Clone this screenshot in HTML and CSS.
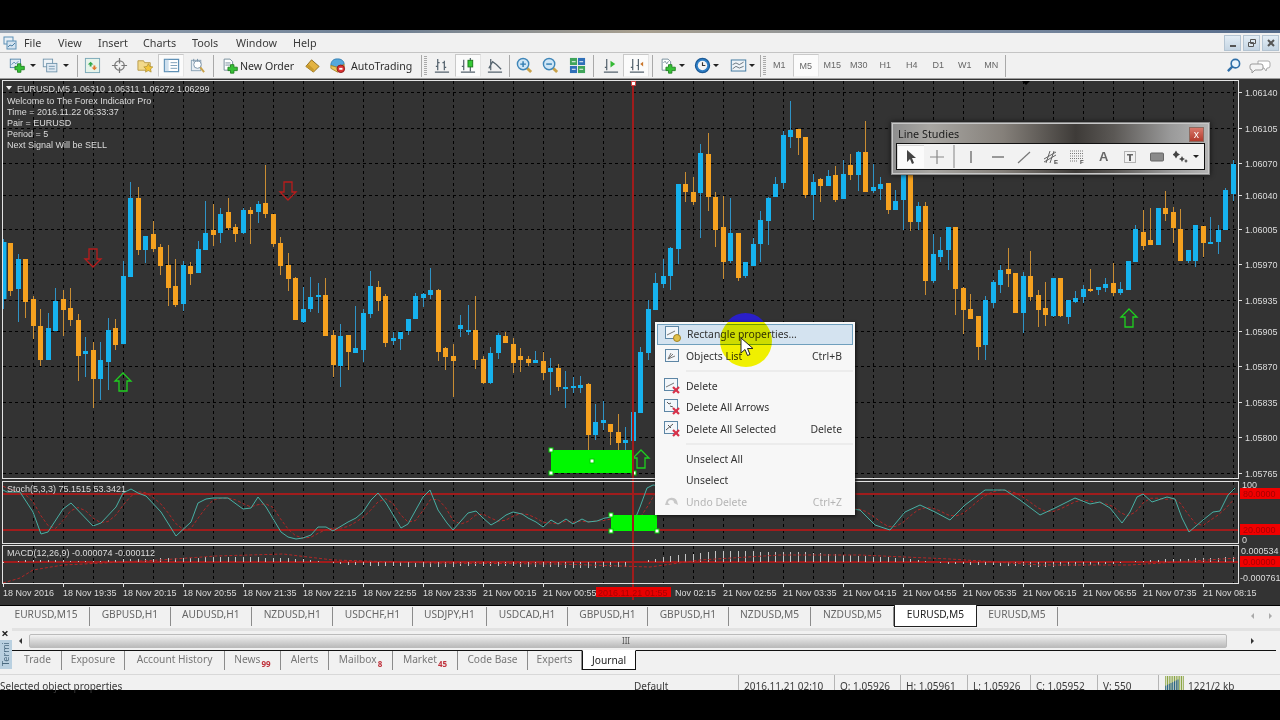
FILE: index.html
```html
<!DOCTYPE html>
<html lang="en">
<head>
    <meta charset="UTF-8">
    <title>MetaTrader 4 - EURUSD,M5</title>
    <link rel="stylesheet" href="styles.css">
</head>
<body>
<div class="window">
    <div class="topline"></div>

    <nav class="menubar">
        <svg class="appicon" viewBox="0 0 14 14"><rect x="1" y="1" width="9" height="7" fill="#e8f0f6" stroke="#5d8fb5"/><rect x="4" y="5" width="9" height="8" fill="#d3e2ee" stroke="#5d8fb5"/><path d="M5 11l2-2 2 1 3-3" fill="none" stroke="#4a7fa5"/></svg>
        <span class="m-file">File</span>
        <span class="m-view">View</span>
        <span class="m-insert">Insert</span>
        <span class="m-charts">Charts</span>
        <span class="m-tools">Tools</span>
        <span class="m-window">Window</span>
        <span class="m-help">Help</span>
        <div class="winbtns">
            <span class="winbtn"><svg viewBox="0 0 12 12"><path d="M3 9h6" stroke="#555" stroke-width="2"/></svg></span>
            <span class="winbtn"><svg viewBox="0 0 12 12"><path d="M4.500 2.500h5v4h-5zM2.500 5.500h5v4h-5z" fill="#dde8f0" stroke="#555"/></svg></span>
            <span class="winbtn"><svg viewBox="0 0 12 12"><path d="M3 3l6 6M9 3l-6 6" stroke="#555" stroke-width="2"/></svg></span>
        </div>
    </nav>

    <div class="toolbar">
        <span class="tool w-drop"><svg viewBox="0 0 20 18"><rect x="1.500" y="1.500" width="12" height="10" fill="#dfe9f2" stroke="#4a7fa5"/><path d="M3 8l3-3 2 2 3-3" fill="none" stroke="#4a7fa5"/><path d="M10 7h4v3h4v4h-4v3h-4v-3H7v-4h3z" fill="#36c136" stroke="#1c7d1c"/></svg><i class="caret"></i></span>
        <span class="tool w-drop"><svg viewBox="0 0 20 18"><rect x="1.500" y="1.500" width="11" height="9" fill="#eef3f7" stroke="#6a8fa8"/><rect x="5.500" y="6.500" width="12" height="10" fill="#dfe9f2" stroke="#6a8fa8"/><path d="M8 10h7M8 13h7" stroke="#6a8fa8"/></svg><i class="caret"></i></span>
        <i class="sep s-r0"></i>
        <span class="tool w-28"><svg viewBox="0 0 18 18"><rect x="1.500" y="1.500" width="15" height="15" fill="#e6f3ea" stroke="#7aa8b8"/><path d="M5 5l3 3H6v2H4V8H2z" fill="#2fa84a" transform="translate(2 0)"/><path d="M10 13l-3-3h2V8h2v2h2z" fill="#e0792a" transform="translate(1 1)"/></svg></span>
        <span class="tool"><svg viewBox="0 0 18 18"><circle cx="9" cy="9" r="5" fill="none" stroke="#777" stroke-width="1.300"/><path d="M9 1v6M9 11v6M1 9h6M11 9h6" stroke="#777" stroke-width="1.300"/></svg></span>
        <span class="tool"><svg viewBox="0 0 18 18"><path d="M1 4h6l1 2h6v8H1z" fill="#f2d98a" stroke="#b89a48"/><path d="M12 7l1.500 3 3.300.5-2.400 2.200.6 3.300-3-1.600-3 1.600.6-3.300-2.400-2.200 3.300-.5z" fill="#f2c53a" stroke="#a98a2a" stroke-width=".7"/></svg></span>
        <span class="tool on"><svg viewBox="0 0 18 18"><rect x="1.500" y="2.500" width="15" height="13" fill="#fff" stroke="#5d8fb5" stroke-width="1.300"/><rect x="2" y="3" width="4" height="12" fill="#cfe0ee"/><path d="M8 6h7M8 9h7M8 12h7" stroke="#7a9db8"/></svg></span>
        <span class="tool"><svg viewBox="0 0 18 18"><rect x="2.500" y="3.500" width="10" height="11" fill="#e6edf3" stroke="#8ba3b5"/><circle cx="9" cy="8" r="4" fill="#fff" stroke="#7a93a8"/><path d="M12 11l4 5" stroke="#c9a24a" stroke-width="2"/><path d="M5 2v3M9 2v3" stroke="#7a93a8"/></svg></span>
        <i class="sep s-r0"></i>
        <span class="tool w-text"><svg viewBox="0 0 20 18"><path d="M2.500 1.500h7l3 3v10h-10z" fill="#fff" stroke="#66808f"/><path d="M4 6h6M4 8.500h6" stroke="#66808f"/><path d="M10 8h4v3h4v4h-4v3h-4v-3H7v-4h3z" fill="#36c136" stroke="#1c7d1c"/></svg><b>New Order</b></span>
        <span class="tool"><svg viewBox="0 0 18 18"><path d="M2 10l6-7 8 7-6 6z" fill="#e3b341" stroke="#8d6c1f"/><path d="M2 10l8 6 .5-3-5.500-5z" fill="#c99a2b"/></svg></span>
        <span class="tool w-text2"><svg viewBox="0 0 18 18"><path d="M2 9c0-5 3-7 7-7s7 2 7 6l-7 3z" fill="#55a8dc" stroke="#2f7bb0"/><path d="M2 9l7 2 7-3v3l-7 5-7-4z" fill="#e8c45a" stroke="#a98a2a"/><circle cx="12.500" cy="12.500" r="4" fill="#d33" stroke="#8c1a1a"/><rect x="10.800" y="11.500" width="3.500" height="2" fill="#fff"/></svg><b>AutoTrading</b></span>
        <i class="sep s-r2"></i><i class="grip"></i>
        <span class="tool w-26h"><svg viewBox="0 0 18 18"><path d="M2 16h15M5 2v12M3 10h2M5 6h2M12 4v10M10 6h2M12 11h2" fill="none" stroke="#55636e" stroke-width="1.300"/></svg></span>
        <span class="tool w-26h on"><svg viewBox="0 0 18 18"><path d="M2 16h15M5 3v11M3 10h2M12 1v14" fill="none" stroke="#55636e" stroke-width="1.300"/><rect x="9.500" y="3.500" width="5" height="7" fill="#35c935" stroke="#1c7d1c"/></svg></span>
        <span class="tool w-26h"><svg viewBox="0 0 18 18"><path d="M2 16h15M5 2v12M3 12l4-7 4 3 5 5" fill="none" stroke="#55636e" stroke-width="1.300"/></svg></span>
        <i class="sep s-l1"></i>
        <span class="tool w-26h"><svg viewBox="0 0 18 18"><path d="M11 11l5 5" stroke="#c9a24a" stroke-width="3"/><circle cx="7.500" cy="7.500" r="6" fill="#cfe6f6" stroke="#3f86b8" stroke-width="1.500"/><path d="M4.500 7.500h6M7.500 4.500v6" stroke="#2f7bb0" stroke-width="1.500"/></svg></span>
        <span class="tool w-26h"><svg viewBox="0 0 18 18"><path d="M11 11l5 5" stroke="#c9a24a" stroke-width="3"/><circle cx="7.500" cy="7.500" r="6" fill="#cfe6f6" stroke="#3f86b8" stroke-width="1.500"/><path d="M4.500 7.500h6" stroke="#2f7bb0" stroke-width="1.500"/></svg></span>
        <span class="tool"><svg viewBox="0 0 18 18"><rect x="1" y="1" width="7.500" height="7.500" fill="#3fa45a"/><rect x="9.500" y="1" width="7.500" height="7.500" fill="#2f6fb8"/><rect x="1" y="9.500" width="7.500" height="7.500" fill="#2f6fb8"/><rect x="9.500" y="9.500" width="7.500" height="7.500" fill="#3fa45a"/><path d="M3 5h4M11 5h4M3 13h4M11 13h4" stroke="#fff"/></svg></span>
        <i class="sep"></i>
        <span class="tool"><svg viewBox="0 0 18 18"><path d="M2 16h15M5 2v12M3 11h2" fill="none" stroke="#55636e" stroke-width="1.300"/><path d="M9 4l5 3.500-5 3.500z" fill="#35b935"/></svg></span>
        <span class="tool on"><svg viewBox="0 0 18 18"><path d="M2 16h15M5 2v12M3 11h2M11 2v12M9 9h2" fill="none" stroke="#55636e" stroke-width="1.300"/><path d="M16 5l-3 2.500 3 2.500z" fill="#c9752a"/></svg></span>
        <i class="sep s-r0"></i>
        <span class="tool w-drop2"><svg viewBox="0 0 20 18"><path d="M2.500 1.500h7l3 3v10h-10z" fill="#fff" stroke="#66808f"/><path d="M4 6l2-2 2 3 2-3" fill="none" stroke="#66808f"/><path d="M10 8h4v3h4v4h-4v3h-4v-3H7v-4h3z" fill="#36c136" stroke="#1c7d1c"/></svg><i class="caret"></i></span>
        <span class="tool w-drop2"><svg viewBox="0 0 18 18"><circle cx="9" cy="9" r="7.500" fill="#2f80c8" stroke="#1c5a96" stroke-width="1.300"/><circle cx="9" cy="9" r="5" fill="#f4f4f4"/><path d="M9 5.500V9h3" fill="none" stroke="#333" stroke-width="1.200"/></svg><i class="caret"></i></span>
        <span class="tool w-drop3"><svg viewBox="0 0 20 18"><rect x="1.500" y="2.500" width="17" height="13" fill="#eef3f7" stroke="#4a7fa5" stroke-width="1.200"/><path d="M3 8l4-2 4 2 5-3M3 13l4-3 4 2 5-2" fill="none" stroke="#55636e"/></svg><i class="caret"></i></span>
        <i class="sep s-l0 s-r2"></i><i class="grip g-tight"></i>
        <span class="period">M1</span>
        <span class="period on">M5</span>
        <span class="period">M15</span>
        <span class="period">M30</span>
        <span class="period">H1</span>
        <span class="period">H4</span>
        <span class="period">D1</span>
        <span class="period">W1</span>
        <span class="period">MN</span>
        <i class="sep s-l0"></i>
        <div class="tb-right">
            <svg viewBox="0 0 16 16"><circle cx="10" cy="6" r="4.500" fill="#e8f3fb" stroke="#2f6fa8" stroke-width="1.700"/><path d="M7 9l-5 5" stroke="#2f6fa8" stroke-width="2.500"/></svg>
            <svg viewBox="0 0 22 16"><path d="M9 3h10a2 2 0 0 1 2 2v3a2 2 0 0 1-2 2h-1l-1 3-2-3H9z" fill="#fff" stroke="#aaa"/><path d="M3 6h9a2 2 0 0 1 2 2v2a2 2 0 0 1-2 2H6l-3 3v-3a2 2 0 0 1-2-2V8a2 2 0 0 1 2-2z" fill="#f4f4f4" stroke="#999"/></svg>
        </div>
    </div>

    <div class="workspace">
        <svg id="chart" class="chart" viewBox="0 79 1280 526" width="1280" height="526"></svg>

        <div class="linestudies">
            <div class="ls-title"><span>Line Studies</span><i class="ls-close">x</i></div>
            <div class="ls-body">
                <span class="ls-tool on"><svg viewBox="0 0 16 16"><path d="M4 1v12l3-3 2 5 2-1-2-5h4z" fill="#444"/></svg></span>
                <span class="ls-tool"><svg viewBox="0 0 16 16"><path d="M8 1v14M1 8h14" stroke="#888" stroke-width="1.200"/></svg></span>
                <i class="ls-sep"></i>
                <span class="ls-tool"><svg viewBox="0 0 16 16"><path d="M8 2v12" stroke="#666" stroke-width="1.300"/></svg></span>
                <span class="ls-tool"><svg viewBox="0 0 16 16"><path d="M2 8h12" stroke="#666" stroke-width="1.300"/></svg></span>
                <span class="ls-tool"><svg viewBox="0 0 16 16"><path d="M2 14L14 3" stroke="#777" stroke-width="1.200"/></svg></span>
                <span class="ls-tool"><svg viewBox="0 0 16 16"><path d="M1 10l12-7M1 13l12-7M3 14l4-12M7 14l4-12" stroke="#666" fill="none"/><text class="ls-mini" x="11" y="15">E</text></svg></span>
                <span class="ls-tool"><svg viewBox="0 0 16 16"><path d="M1 2h13M1 4.500h13M1 7h13M1 9.500h13M1 12h8" stroke="#777" stroke-dasharray="1 1"/><text class="ls-mini" x="11" y="15">F</text></svg></span>
                <span class="ls-tool ls-a">A</span>
                <span class="ls-tool"><svg viewBox="0 0 16 16"><rect x="2.500" y="2.500" width="11" height="11" fill="none" stroke="#777" stroke-dasharray="1 1"/><path d="M5 5h6v1.500H9V12H7V6.500H5z" fill="#666"/></svg></span>
                <span class="ls-tool"><svg viewBox="0 0 16 16"><rect x="1.500" y="4" width="13" height="8" rx="1" fill="#8a8a8a" stroke="#666"/></svg></span>
                <span class="ls-tool ls-wide"><svg viewBox="0 0 16 16"><path d="M3 1.500l1.500 2.500 2.500 1.500-2.500 1.500-1.500 2.500-1.500-2.500L-.5 5.500 1.500 4zM9 7l1 2 2 1-2 1-1 2-1-2-2-1 2-1zM13 10l.8 1.500 1.200.5-1.200.5L13 14l-.8-1.500-1.200-.5 1.200-.5z" fill="#444"/></svg><i class="caret"></i></span>
            </div>
        </div>

        <div class="bluedot"></div>
        <div class="ctxmenu">
            <div class="mi hot"><span class="mi-ico"><svg viewBox="0 0 18 18"><rect x="1.500" y="1.500" width="13" height="12" fill="#f2f6fa" stroke="#5d86a5"/><path d="M3 10l8-4" stroke="#777"/><circle cx="13" cy="13" r="3.500" fill="#e2c04a" stroke="#a08428"/></svg></span><span class="mi-text">Rectangle properties...</span></div>
            <div class="mi"><span class="mi-ico"><svg viewBox="0 0 18 18"><rect x="2.500" y="2.500" width="13" height="12" fill="#f2f6fa" stroke="#5d86a5"/><path d="M5 12l3-6M5 12l7-3M5 12l5-5" stroke="#777" fill="none"/></svg></span><span class="mi-text">Objects List</span><span class="mi-key">Ctrl+B</span></div>
            <div class="mi-sep"></div>
            <div class="mi"><span class="mi-ico"><svg viewBox="0 0 18 18"><rect x="1.500" y="1.500" width="13" height="12" fill="#f2f6fa" stroke="#5d86a5"/><path d="M3 10l8-4" stroke="#777"/><path d="M10 10l6 6M16 10l-6 6" stroke="#d8324a" stroke-width="2.200"/></svg></span><span class="mi-text">Delete</span></div>
            <div class="mi"><span class="mi-ico"><svg viewBox="0 0 18 18"><rect x="1.500" y="1.500" width="13" height="12" fill="#f2f6fa" stroke="#5d86a5"/><path d="M4 4l2 2 2-1M7 8l3 1" stroke="#555" fill="none"/><path d="M10 10l6 6M16 10l-6 6" stroke="#d8324a" stroke-width="2.200"/></svg></span><span class="mi-text">Delete All Arrows</span></div>
            <div class="mi"><span class="mi-ico"><svg viewBox="0 0 18 18"><rect x="1.500" y="1.500" width="13" height="12" fill="#f2f6fa" stroke="#5d86a5"/><path d="M3 10l7-6M5 5l3 3" stroke="#555" fill="none"/><path d="M10 10l6 6M16 10l-6 6" stroke="#d8324a" stroke-width="2.200"/></svg></span><span class="mi-text">Delete All Selected</span><span class="mi-key">Delete</span></div>
            <div class="mi-sep"></div>
            <div class="mi"><span class="mi-ico"></span><span class="mi-text">Unselect All</span></div>
            <div class="mi"><span class="mi-ico"></span><span class="mi-text">Unselect</span></div>
            <div class="mi off"><span class="mi-ico"><svg viewBox="0 0 18 18"><path d="M3 9a6 6 0 0 1 11-1l1 4-4-2a3 3 0 0 0-6 0l2 2H2z" fill="#c8c8c8"/></svg></span><span class="mi-text">Undo Delete</span><span class="mi-key">Ctrl+Z</span></div>
            <div class="halo"></div>
            <svg class="pointer" viewBox="0 0 14 20"><path d="M1 1v15l4-3.500 2.500 6 2.500-1-2.500-6H13z" fill="#fff" stroke="#222"/></svg>
        </div>
    </div>

    <div class="chart-tabs">
        <span class="ctab">EURUSD,M15</span>
        <span class="ctab">GBPUSD,H1</span>
        <span class="ctab">AUDUSD,H1</span>
        <span class="ctab">NZDUSD,H1</span>
        <span class="ctab">USDCHF,H1</span>
        <span class="ctab">USDJPY,H1</span>
        <span class="ctab">USDCAD,H1</span>
        <span class="ctab">GBPUSD,H1</span>
        <span class="ctab">GBPUSD,H1</span>
        <span class="ctab">NZDUSD,M5</span>
        <span class="ctab">NZDUSD,M5</span>
        <span class="ctab on">EURUSD,M5</span>
        <span class="ctab">EURUSD,M5</span>
        <span class="ctab-arrows"><i class="arr-l"></i><i class="arr-r"></i></span>
    </div>

    <div class="terminal">
        <div class="term-side">
            <span class="term-x">×</span>
            <span class="term-label">Termi</span>
        </div>
        <div class="term-main">
            <div class="hscroll">
                <i class="arr-l dark"></i>
                <div class="thumb"><span>III</span></div>
                <i class="arr-r dark"></i>
            </div>
            <div class="term-tabs">
                <span class="ttab">Trade</span>
                <span class="ttab">Exposure</span>
                <span class="ttab">Account History</span>
                <span class="ttab">News<sub>99</sub></span>
                <span class="ttab">Alerts</span>
                <span class="ttab">Mailbox<sub>8</sub></span>
                <span class="ttab">Market<sub>45</sub></span>
                <span class="ttab">Code Base</span>
                <span class="ttab">Experts</span>
                <span class="ttab on">Journal</span>
            </div>
        </div>
    </div>

    <footer class="statusbar">
        <span class="st st-msg">Selected object properties</span>
        <span class="st st-profile">Default</span>
        <span class="st st-time">2016.11.21 02:10</span>
        <span class="st st-o">O: 1.05926</span>
        <span class="st st-h">H: 1.05961</span>
        <span class="st st-l">L: 1.05926</span>
        <span class="st st-h">C: 1.05952</span>
        <span class="st st-v">V: 550</span>
        <span class="st st-net"><svg viewBox="0 0 22 16"><path d="M1 16V0M3 16V0M5 16V0M7 16V0M9 16V0M11 16V0M13 16V0M15 16V0M17 16V0M19 16V0M21 16V0" stroke="#7d9a2a"/><path d="M1 16V11M3 16V10M5 16V9M7 16V8M9 16V7M11 16V6M13 16V5M15 16V4" stroke="#1c5a96"/></svg>1221/2 kb</span>
    </footer>
</div>
<script src="chart.js"></script>
</body>
</html>
```

FILE: styles.css
```css
* {
    box-sizing: border-box;
}
body {
    margin: 0;
    background: #000;
    height: 720px;
    overflow: hidden;
    font-family: "Noto Sans", "Liberation Sans", sans-serif;
    font-size: 10.400px;
    color: #333;
}
.window {
    padding-top: 30px;
    height: 690px;
}
.topline {
    height: 3px;
    background: linear-gradient(90deg, #9aa6b4, #6d7f94 30%, #a89f8e 50%, #7d8ca0 75%, #556b8a);
}

/* menu */
.menubar {
    display: flex;
    align-items: center;
    height: 19px;
    background: #f1f1f1;
    font-size: 10.800px;
}
.menubar span {
    color: #3a3a3a;
    flex: none;
}
.appicon {
    width: 14px;
    height: 14px;
    margin-left: 3px;
    margin-right: 7px;
}
.m-file { width: 34px; }
.m-view { width: 40px; }
.m-insert { width: 45px; }
.m-charts { width: 49px; }
.m-tools { width: 44px; }
.m-window { width: 57px; }
.m-help { width: 30px; }
.winbtns {
    margin-left: auto;
    margin-right: 1px;
    display: flex;
    gap: 2px;
}
.winbtn {
    width: 17px;
    height: 16px;
    background: linear-gradient(#e3edf5, #c5d5e3);
    border: 1px solid #b4c4d2;
    display: flex;
    align-items: center;
    justify-content: center;
}
.winbtn svg {
    width: 12px;
    height: 12px;
}

/* toolbars */
.toolbar {
    display: flex;
    align-items: center;
    height: 27px;
    background: #f1f1f1;
    border-top: 1px solid #c4c4c4;
    border-bottom: 1px solid #9c9c9c;
    padding-left: 8px;
}
.tool {
    display: flex;
    align-items: center;
    justify-content: center;
    height: 23px;
    width: 26px;
    flex: none;
}
.tool svg {
    width: 17px;
    height: 17px;
    flex: none;
}
.tool.on, .period.on {
    background: #fbfbfb;
    border: 1px solid #c9c9c9;
    border-bottom-color: #f1f1f1;
    border-right-color: #e4e4e4;
}
.tool b, .period {
    font-weight: normal;
}
.tool b {
    color: #2e2e2e;
    font-size: 10.600px;
    white-space: nowrap;
}
.w-28 { width: 28px; }
.w-26h { width: 26.500px; }
.w-drop { width: 33px; justify-content: flex-start; padding-left: 1px; }
.w-drop2 { width: 33.500px; justify-content: flex-start; padding-left: 7px; }
.w-drop3 { width: 40px; justify-content: flex-start; padding-left: 10px; }
.w-drop2 .caret, .w-drop3 .caret { margin-left: 2px; }
.w-text { width: 85px; justify-content: flex-start; padding-left: 8px; }
.w-text b { margin-left: 1px; }
.w-text2 { width: 93px; justify-content: flex-start; padding-left: 4px; }
.w-text2 b { margin-left: 5px; }
.caret {
    display: block;
    width: 0;
    height: 0;
    margin-left: 4px;
    border: 3px solid transparent;
    border-top: 3px solid #222;
    border-bottom: 0;
}
.sep {
    display: block;
    flex: none;
    width: 1px;
    height: 22px;
    margin: 0 3px;
    background: #a9a9a9;
}
.s-r0 { margin-right: 0; }
.s-r2 { margin-right: 2px; }
.s-l0 { margin-left: 0; }
.s-l1 { margin-left: 1.500px; margin-right: 1px; }
.grip {
    display: block;
    flex: none;
    width: 3px;
    height: 19px;
    margin-right: 1px;
    background: repeating-linear-gradient(#aaa 0 1px, transparent 1px 2px);
}
.g-tight {
    margin-right: 0;
}
.period {
    flex: none;
    width: 26.500px;
    height: 23px;
    line-height: 22px;
    text-align: center;
    font-size: 9px;
    color: #666;
    font-family: "Liberation Sans", sans-serif;
}
.tb-right {
    margin-left: auto;
    margin-right: 9px;
    display: flex;
    align-items: center;
    gap: 8px;
}
.tb-right svg:first-child {
    width: 15px;
    height: 15px;
}
.tb-right svg:last-child {
    width: 22px;
    height: 16px;
}

/* chart */
.workspace {
    position: relative;
    height: 526px;
    background: #333;
}
.chart {
    display: block;
    background: #333;
    font-family: "Liberation Sans", sans-serif;
    font-size: 9px;
}
.chart text {
    fill: #dcdcdc;
}
.chart .flag-text {
    fill: #a80000;
}

/* floating line studies */
.linestudies {
    position: absolute;
    left: 891px;
    top: 43px;
    width: 319px;
    height: 53px;
    padding: 3px 4px 0;
    border: 1px solid #888;
    background: linear-gradient(90deg, #8e8e8e, #a8a6a2 12%, #85807a 35%, #3e3b38 58%, #5b5855 70%, #9a9a9a 88%, #b5b5b5);
    box-shadow: 0 0 5px #111, inset 0 0 0 1px #c8c8c8;
}
.ls-title {
    display: flex;
    justify-content: space-between;
    align-items: center;
    height: 17px;
    font-size: 10.800px;
    color: #1c1c1c;
}
.ls-title span {
    margin-left: 2px;
    margin-top: -3px;
}
.ls-close {
    width: 15px;
    height: 15px;
    margin-right: 1px;
    background: linear-gradient(#d8776a, #b23a2c);
    border: 1px solid #8c6a60;
    color: #fff;
    font-style: normal;
    font-size: 10px;
    line-height: 12px;
    text-align: center;
}
.ls-body {
    display: flex;
    align-items: center;
    height: 27px;
    background: #f2f2f2;
    border: 1px solid #111;
}
.ls-tool {
    flex: none;
    width: 26.500px;
    height: 23px;
    display: flex;
    align-items: center;
    justify-content: center;
}
.ls-tool.on {
    background: #fbfbfb;
    border: 1px solid #d8d8d8;
    border-right: 0;
    border-bottom: 0;
}
.ls-tool svg {
    width: 16px;
    height: 16px;
    flex: none;
}
.ls-a {
    font-weight: bold;
    font-size: 13px;
    color: #666;
    font-family: "Liberation Sans", sans-serif;
}
.ls-wide {
    width: 32px;
}
.ls-mini {
    font: bold 6px "Liberation Sans", sans-serif;
    fill: #444;
}
.ls-sep {
    display: block;
    width: 2px;
    height: 23px;
    margin: 0 3px;
    background: #bbb;
}

/* context menu */
.bluedot {
    position: absolute;
    left: 722px;
    top: 234px;
    width: 47px;
    height: 47px;
    border-radius: 50%;
    background: #2a1fc8;
}
.ctxmenu {
    position: absolute;
    left: 655px;
    top: 243px;
    width: 200px;
    height: 193px;
    padding: 1.500px 2px;
    background: #f7f7f7;
    overflow: hidden;
    box-shadow: 1px 1px 3px #111;
    font-size: 10.400px;
}
.halo {
    position: absolute;
    left: 65px;
    top: -7px;
    width: 52px;
    height: 52px;
    border-radius: 50%;
    background: #f8f800;
    mix-blend-mode: multiply;
}
.mi {
    position: relative;
    display: flex;
    align-items: center;
    height: 21.700px;
    color: #333;
}
.mi.hot {
    background: #d4e3f0;
    border: 1px solid #6f9fbd;
}
.mi-ico {
    flex: none;
    width: 29px;
    height: 100%;
    display: flex;
    align-items: center;
    justify-content: center;
    padding-left: 1px;
}
.mi-ico svg {
    width: 18px;
    height: 18px;
}
.mi-text {
    flex: 1;
    white-space: nowrap;
}
.mi-key {
    margin-right: 11px;
}
.mi.off {
    color: #b4b4b4;
}
.mi-sep {
    height: 8px;
    background: linear-gradient(#f7f7f7 3px, #ececec 3px 5px, #f7f7f7 5px);
    margin-left: 29px;
}
.pointer {
    position: absolute;
    left: 85px;
    top: 15px;
    width: 14px;
    height: 20px;
}

/* chart tabs */
.chart-tabs {
    display: flex;
    height: 23px;
    background: #f1f1f1;
    border-top: 1px solid #000;
    font-size: 10.200px;
    color: #666;
    padding-left: 3px;
}
.ctab {
    flex: none;
    height: 19px;
    margin-top: 1px;
    line-height: 15px;
    padding: 0 11.500px;
    border-right: 1px solid #8c8c8c;
    white-space: nowrap;
}
.ctab.on {
    height: 22px;
    margin-top: -1px;
    padding-top: 2px;
    line-height: 15px;
    background: #fff;
    border: 1px solid #222;
    border-top: 0;
    color: #222;
}
.ctab-arrows {
    margin-left: auto;
    margin-right: 8px;
    display: flex;
    align-items: center;
    gap: 15px;
    height: 19px;
}
.arr-l, .arr-r {
    display: block;
    width: 0;
    height: 0;
    border: 3px solid transparent;
}
.arr-l {
    border-right: 3px solid #aaa;
    border-left: 0;
}
.arr-r {
    border-left: 3px solid #aaa;
    border-right: 0;
}
.arr-l.dark { border-right-color: #333; }
.arr-r.dark { border-left-color: #333; }

/* terminal */
.terminal {
    display: flex;
    height: 46px;
    background: #f1f1f1;
}
.term-side {
    flex: none;
    width: 12px;
    display: flex;
    flex-direction: column;
    align-items: flex-start;
}
.term-x {
    height: 12px;
    width: 10px;
    text-align: center;
    font-size: 13px;
    font-weight: bold;
    line-height: 10px;
    color: #222;
}
.term-label {
    width: 12px;
    height: 29px;
    background: #b9d0e0;
    color: #4a6a80;
    font-size: 9px;
    line-height: 12px;
    writing-mode: vertical-rl;
    transform: rotate(180deg);
    text-align: center;
    white-space: nowrap;
}
.term-main {
    flex: 1;
    border-top: 3px solid #e2e2e2;
}
.hscroll {
    display: flex;
    align-items: center;
    height: 19px;
    padding: 3px 0;
}
.hscroll .arr-l {
    margin-left: 7px;
    margin-right: 7px;
}
.hscroll .arr-r {
    margin-left: 24px;
}
.thumb {
    width: 1198px;
    height: 14px;
    border: 1px solid #bbb;
    border-radius: 2px;
    background: linear-gradient(#f2f2f2, #dcdcdc 40%, #bcbcbc);
    text-align: center;
    font-size: 8px;
    line-height: 12px;
    color: #555;
}
.thumb span {
    position: relative;
    left: -2px;
}
.term-tabs {
    display: flex;
    height: 24px;
    border-top: 1px solid #111;
    margin-right: 4px;
    padding-left: 2px;
    font-size: 10.200px;
    color: #777;
}
.ttab {
    flex: none;
    height: 19px;
    line-height: 17px;
    text-align: center;
    border-right: 1px solid #8c8c8c;
    white-space: nowrap;
}
.ttab:nth-child(1) { width: 48px; }
.ttab:nth-child(2) { width: 63px; }
.ttab:nth-child(3) { width: 100px; }
.ttab:nth-child(4) { width: 56px; }
.ttab:nth-child(5) { width: 48px; }
.ttab:nth-child(6) { width: 64px; }
.ttab:nth-child(7) { width: 65px; }
.ttab:nth-child(8) { width: 70px; }
.ttab:nth-child(9) { width: 54px; }
.ttab:nth-child(10) { width: 54px; }
.ttab sub {
    font-size: 8px;
    font-weight: bold;
    color: #c0323c;
    margin-left: 1px;
    vertical-align: -4px;
    line-height: 0;
}
.ttab.on {
    height: 20px;
    margin-top: -1px;
    padding-top: 1px;
    background: #fff;
    border: 1px solid #111;
    border-top: 1px solid #fff;
    color: #222;
}

/* status bar: the text runs a little past the bottom of the window, onto the black */
.statusbar {
    display: flex;
    height: 16px;
    background: #f1f1f1;
    border-top: 1px solid #d8d8d8;
    font-size: 10px;
    color: #3a3a3a;
    line-height: 22px;
}
.st {
    flex: none;
    padding-left: 5px;
    border-left: 1px solid #b5b5b5;
    white-space: nowrap;
}
.st-msg { width: 630px; padding-left: 0; border: 0; }
.st-profile { width: 108px; border: 0; padding-left: 4px; }
.st-time { width: 96px; }
.st-o { width: 66px; }
.st-h { width: 67px; }
.st-l { width: 63px; }
.st-v { width: 61px; }
.st-net { display: flex; align-items: flex-start; padding-left: 5px; }
.st-net svg {
    width: 21px;
    height: 14px;
    margin-right: 3px;
    margin-top: 1px;
}
```

FILE: chart.js
```js
// chart drawing: page coordinates, one candle every 7.5px from x=3
// [type, bodyTop, bodyBottom, wickTop, wickBottom], type 0 = blue, 1 = orange
const candles = [
    [0,242,299,239,309],[1,243,291,243,296],[0,259,289,254,322],[1,259,302,259,318],[1,299,326,296,339],
    [1,326,360,309,366],[0,328,360,313,360],[0,301,331,288,331],[1,299,310,290,336],[1,308,320,288,326],
    [1,320,356,314,381],[0,351,354,337,377],[1,350,379,342,408],[0,360,379,342,400],[0,330,362,318,390],
    [1,328,345,319,350],[0,276,344,261,344],[0,198,277,182,277],[1,198,250,187,255],[0,236,250,236,263],
    [1,234,249,221,252],[1,247,266,244,275],[1,265,288,245,306],[1,286,305,259,307],[0,265,304,261,311],
    [1,266,274,262,285],[0,249,273,241,273],[0,233,250,201,250],[1,230,235,204,246],[0,214,233,208,243],
    [1,212,228,198,230],[1,227,234,224,242],[0,210,233,208,234],[1,210,214,207,244],[0,204,212,201,223],
    [1,203,214,165,218],[1,214,244,214,247],[1,243,266,237,275],[1,265,279,253,291],[1,278,320,277,320],
    [0,309,322,287,323],[0,297,309,277,312],[0,295,296,283,313],[1,295,336,278,336],[1,335,365,330,377],
    [0,336,366,324,387],[1,335,352,335,370],[0,348,353,306,353],[0,313,350,309,362],[0,286,314,271,318],
    [1,287,301,281,311],[1,296,343,294,347],[0,338,341,332,345],[0,332,339,332,350],[0,319,331,319,335],
    [0,296,319,293,319],[0,294,298,293,307],[0,290,295,268,299],[1,290,352,289,361],[1,348,357,347,370],
    [1,356,361,344,397],[0,325,329,315,337],[0,330,331,305,335],[1,330,360,296,369],[1,359,383,356,384],
    [0,353,383,347,384],[0,335,353,333,359],[1,336,343,332,343],[1,344,363,338,373],[1,356,360,348,372],
    [1,359,363,356,366],[0,360,363,351,363],[1,361,373,352,380],[0,368,372,358,395],[1,368,387,364,391],
    [0,387,388,371,408],[0,386,388,377,393],[0,385,388,376,393],[1,384,435,383,462],[0,422,435,404,440],
    [0,420,423,401,430],[1,424,432,424,445],[1,432,443,414,450],[0,440,443,427,450],[0,412,441,408,441],
    [0,352,413,347,413],[0,309,353,300,360],[0,283,310,273,310],[0,276,284,259,288],[0,248,276,247,290],
    [0,184,249,184,264],[1,184,192,172,202],[1,192,202,177,205],[0,153,193,144,238],[1,154,197,133,211],
    [1,197,230,192,247],[1,227,262,196,279],[0,233,261,198,263],[1,233,278,233,281],[0,262,276,262,278],
    [0,244,266,238,266],[0,220,244,211,262],[0,198,221,197,245],[0,184,197,177,197],[0,135,183,131,189],
    [0,130,137,101,148],[1,129,138,129,155],[1,137,195,137,198],[0,182,195,174,220],[1,179,186,178,202],
    [0,176,186,170,186],[1,175,200,166,202],[0,174,199,160,199],[1,165,175,154,180],[0,152,175,151,191],
    [1,152,192,121,192],[0,187,191,164,193],[0,184,189,177,200],[1,183,210,183,214],[0,201,210,190,210],
    [0,175,200,175,230],[1,175,222,175,231],[0,206,222,202,230],[1,206,281,202,295],[0,254,281,234,283],
    [0,250,257,237,262],[0,227,250,227,270],[1,227,289,227,315],[1,288,310,287,334],[1,309,319,294,319],
    [1,316,347,316,360],[0,300,345,296,360],[0,282,303,280,308],[0,270,285,265,293],[1,269,274,248,287],
    [1,273,313,273,313],[0,276,313,272,333],[1,276,297,251,301],[1,295,310,290,327],[1,308,315,282,326],
    [0,278,316,278,317],[1,278,316,278,317],[0,300,317,300,324],[0,298,302,291,303],[0,289,297,285,303],
    [1,289,291,269,292],[0,287,290,287,295],[0,284,288,278,292],[1,283,293,263,296],[0,289,293,282,295],
    [0,261,290,261,290],[0,229,262,225,262],[1,232,246,210,250],[1,240,245,208,245],[0,208,245,208,245],
    [1,208,214,191,221],[1,212,228,207,243],[1,229,261,209,261],[0,250,261,250,263],[0,225,261,225,267],
    [1,226,243,226,257],[0,242,243,217,243],[0,230,242,225,254],[0,190,230,188,230],[0,164,194,160,201]
];

const priceLevels = [
    [92,'1.06140'],[128,'1.06105'],[163,'1.06070'],[195,'1.06040'],[229,'1.06005'],[264,'1.05970'],
    [300,'1.05935'],[331,'1.05905'],[366,'1.05870'],[402,'1.05835'],[437,'1.05800'],[473,'1.05765']
];

const timeLabels = [
    [3,'18 Nov 2016'],[63,'18 Nov 19:35'],[123,'18 Nov 20:15'],[183,'18 Nov 20:55'],[243,'18 Nov 21:35'],
    [303,'18 Nov 22:15'],[363,'18 Nov 22:55'],[423,'18 Nov 23:35'],[483,'21 Nov 00:15'],[543,'21 Nov 00:55'],
    [723,'21 Nov 02:55'],[783,'21 Nov 03:35'],[843,'21 Nov 04:15'],[903,'21 Nov 04:55'],
    [963,'21 Nov 05:35'],[1023,'21 Nov 06:15'],[1083,'21 Nov 06:55'],[1143,'21 Nov 07:35'],[1203,'21 Nov 08:15']
];

const infoLines = [
    'Welcome to The Forex Indicator Pro',
    'Time = 2016.11.22 06:33:37',
    'Pair = EURUSD',
    'Period = 5',
    'Next Signal Will be SELL'
];

// stochastic main line
const stoch = [
    [3,490],[7,492],[20,492],[33,512],[41,534],[48,532],[63,509],[71,503],[93,526],[101,523],[116,507],[123,493],
    [131,489],[138,493],[146,496],[161,512],[176,536],[191,522],[198,503],[206,499],[213,498],[228,498],[243,509],
    [251,508],[258,497],[266,507],[281,532],[288,537],[296,539],[303,538],[311,535],[318,527],[326,527],[333,531],
    [348,522],[356,518],[363,512],[371,500],[378,493],[386,503],[401,528],[408,524],[423,497],[430,490],[438,510],
    [447,523],[453,530],[460,522],[468,513],[476,511],[483,518],[491,525],[498,521],[506,515],[513,512],[522,514],
    [528,518],[536,522],[543,527],[551,520],[558,524],[566,519],[573,524],[582,519],[588,522],[597,521],[605,518],
    [612,517],[618,519],[627,522],[633,524],[640,507],[647,488],[653,485],[860,510],[875,525],[890,530],[905,512],
    [920,505],[935,512],[950,520],[965,505],[985,490],[1005,490],[1020,500],[1040,515],[1055,508],[1075,498],[1090,504],
    [1100,502],[1110,508],[1122,523],[1130,512],[1137,497],[1143,494],[1152,502],[1167,497],[1175,499],[1182,518],
    [1189,532],[1203,520],[1213,512],[1220,511],[1228,495],[1235,488]
];

// macd histogram outline and signal line
const macdBars = [
    [3,-1],[30,2],[100,1],[130,3],[230,5],[290,4],[330,0],[345,-3],[420,-5],[500,-4],[580,-6],[625,-5],[640,0],
    [670,6],[720,11],[800,10],[860,6],[900,4],[950,-2],[1040,-5],[1100,-3],[1150,2],[1238,5]
];
const macdSignal = [
    [3,583],[20,578],[33,570],[63,565],[123,562],[160,560],[216,556],[283,554],[333,560],[430,563],[560,564],[620,566],
    [650,567],[700,560],[780,555],[860,555],[950,559],[1040,565],[1130,565],[1238,558]
];

const svg = document.getElementById('chart');
const NS = 'http://www.w3.org/2000/svg';

function el(name, attrs, text) {
    const node = document.createElementNS(NS, name);
    for (const key in attrs) node.setAttribute(key, attrs[key]);
    if (text) node.textContent = text;
    svg.appendChild(node);
    return node;
}

function line(x1, y1, x2, y2, color, width, dash) {
    const attrs = { x1, y1, x2, y2, stroke: color, 'stroke-width': width || 1 };
    if (dash) attrs['stroke-dasharray'] = dash;
    el('line', attrs);
}

function interp(points, x) {
    for (let i = 1; i < points.length; i++) {
        if (x <= points[i][0]) {
            const [x0, y0] = points[i - 1];
            const [x1, y1] = points[i];
            return y0 + (y1 - y0) * (x - x0) / (x1 - x0);
        }
    }
    return points[points.length - 1][1];
}

function poly(points, color, width, dash) {
    const attrs = { points: points.map(p => p.join(',')).join(' '), fill: 'none', stroke: color, 'stroke-width': width };
    if (dash) attrs['stroke-dasharray'] = dash;
    el('polyline', attrs);
}

function arrow(cx, cy, color, up) {
    const d = up ? 1 : -1;
    const pts = [[0,-9],[8,-1],[4,-1],[4,9],[-4,9],[-4,-1],[-8,-1]]
        .map(p => (cx + p[0]) + ',' + (cy + p[1] * d)).join(' ');
    el('polygon', { points: pts, fill: 'none', stroke: color, 'stroke-width': 1.3 });
}

// grid
for (let x = 33; x < 1238; x += 30) {
    line(x + .5, 81, x + .5, 478, '#000', 1, '3 3');
    line(x + .5, 482, x + .5, 542, '#000', 1, '3 3');
    line(x + .5, 546, x + .5, 583, '#000', 1, '3 3');
}
priceLevels.forEach(([y, label]) => {
    line(3, y + .5, 1238, y + .5, '#000', 1, '3 3');
    line(1238, y + .5, 1242, y + .5, '#ddd');
    el('text', { x: 1245, y: y + 3.5 }, label);
});

// candles
candles.forEach(([type, top, bottom, high, low], i) => {
    const x = Math.floor(3 + 7.5 * i) + .5;
    if (x > 1236) return;
    const color = type ? '#f5a11f' : '#16b2ee';
    const wick = type ? '#c98d33' : '#2f93c6';
    line(x, high, x, low, wick);
    el('rect', { x: Math.max(x - 2.5, 3), y: top, width: x < 5 ? 3.5 : 5, height: Math.max(bottom - top, 2), fill: color });
});

// arrows
arrow(123, 382, '#1fd01f', true);
arrow(1129, 318, '#1fd01f', true);
arrow(641, 459, '#1fd01f', true);
arrow(93, 258, '#b81c1c', false);
arrow(288, 191, '#b81c1c', false);

// indicator levels
line(3, 494, 1238, 494, '#a01c1c', 2);
line(3, 530, 1238, 530, '#a01c1c', 2);
line(3, 562, 1238, 562, '#a01c1c', 2);

// stochastic
const signal = [];
for (let x = 3; x <= 1236; x += 7.5) {
    const y = (interp(stoch, x) + interp(stoch, x - 7.5) + interp(stoch, x - 15)) / 3;
    signal.push([x, y]);
}
poly(signal, '#b02626', 1, '3 2');
poly(stoch, '#48b0a4', 1);

// macd
for (let x = 3; x < 1236; x += 7.5) {
    const v = Math.round(interp(macdBars, x));
    const bx = Math.floor(x) + .5;
    if (v) line(bx, 562, bx, 562 - v, '#c4c4c4');
}
poly(macdSignal, '#b02626', 1, '3 2');

// selected rectangles
el('rect', { x: 551, y: 450, width: 83, height: 23, fill: '#00f800' });
el('rect', { x: 611, y: 515, width: 46, height: 16, fill: '#00f800' });
[[551,450],[551,473],[634,473],[592,461],[611,515],[611,531],[657,531]].forEach(([x, y]) => {
    el('rect', { x: x - 2, y: y - 2, width: 4, height: 4, fill: '#fff', stroke: '#00d000' });
});

// vertical cursor line
line(633, 81, 633, 600, '#a01c1c', 2);
el('rect', { x: 631.5, y: 81.5, width: 4, height: 4, fill: '#fff', stroke: '#c44' });

// frames
[[2, 80, 1238, 478], [2, 481, 1238, 543], [2, 545, 1238, 583]].forEach(([x1, y1, x2, y2]) => {
    el('rect', { x: x1 + .5, y: y1 + .5, width: x2 - x1, height: y2 - y1, fill: 'none', stroke: '#e4e4e4' });
});
el('polygon', { points: '1022,81 1030,81 1026,85', fill: '#000' });

// info text
el('polygon', { points: '6,86 12,86 9,90', fill: '#eee' });
el('text', { x: 17, y: 91.5 }, 'EURUSD,M5  1.06310 1.06311 1.06272 1.06299');
infoLines.forEach((t, i) => el('text', { x: 7, y: 103.5 + i * 11.2 }, t));
el('text', { x: 7, y: 492 }, 'Stoch(5,3,3) 75.1515 53.3421');
el('text', { x: 7, y: 556 }, 'MACD(12,26,9) -0.000074 -0.000112');

// sub window axis
el('text', { x: 1242, y: 488 }, '100');
el('text', { x: 1242, y: 543 }, '0');
el('text', { x: 1241, y: 554 }, '0.000534');
el('text', { x: 1240, y: 581 }, '-0.000761');
[[488, '80.0000'], [524, '20.0000'], [556, '0.00000']].forEach(([y, label]) => {
    el('rect', { x: 1240, y, width: 40, height: 11, fill: '#f00000' });
    el('text', { x: 1243, y: y + 9, class: 'flag-text' }, label);
});

// time axis
timeLabels.forEach(([x, label]) => {
    line(x + .5, 583, x + .5, 587, '#ddd');
    el('text', { x, y: 595.5 }, label);
});
el('rect', { x: 596, y: 587, width: 75, height: 10, fill: '#e80000' });
el('text', { x: 598, y: 595.5, class: 'flag-text' }, '2016.11.21 01:55');
el('text', { x: 675, y: 595.5 }, 'Nov 02:15');
```
